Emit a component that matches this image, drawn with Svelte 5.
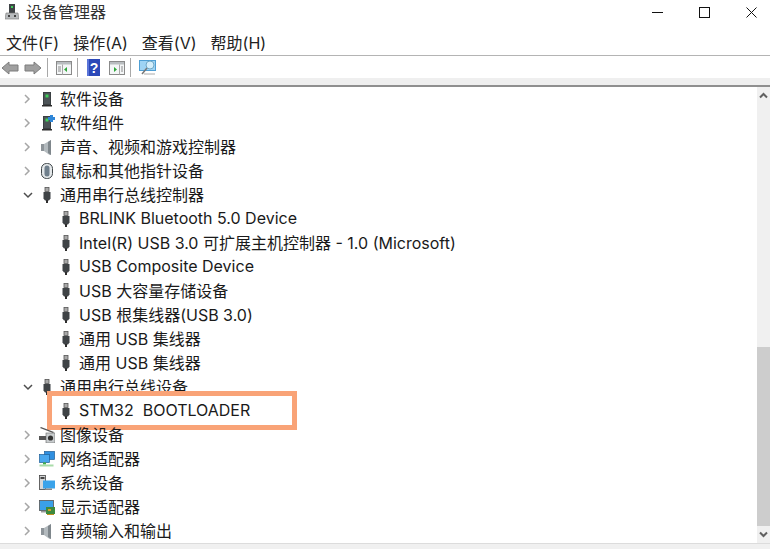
<script>
  const rows = [
    { label: '软件设备', icon: 'device', arrow: 'closed' },
    { label: '软件组件', icon: 'component', arrow: 'closed' },
    { label: '声音、视频和游戏控制器', icon: 'sound', arrow: 'closed' },
    { label: '鼠标和其他指针设备', icon: 'mouse', arrow: 'closed' },
    { label: '通用串行总线控制器', icon: 'usb', arrow: 'open' },
    { label: 'BRLINK Bluetooth 5.0 Device', icon: 'usb', child: true },
    { label: 'Intel(R) USB 3.0 可扩展主机控制器 - 1.0 (Microsoft)', icon: 'usb', child: true },
    { label: 'USB Composite Device', icon: 'usb', child: true },
    { label: 'USB 大容量存储设备', icon: 'usb', child: true },
    { label: 'USB 根集线器(USB 3.0)', icon: 'usb', child: true },
    { label: '通用 USB 集线器', icon: 'usb', child: true },
    { label: '通用 USB 集线器', icon: 'usb', child: true },
    { label: '通用串行总线设备', icon: 'usb', arrow: 'open' },
    { label: 'STM32  BOOTLOADER', icon: 'usb', child: true, marked: true },
    { label: '图像设备', icon: 'camera', arrow: 'closed' },
    { label: '网络适配器', icon: 'network', arrow: 'closed' },
    { label: '系统设备', icon: 'system', arrow: 'closed' },
    { label: '显示适配器', icon: 'display', arrow: 'closed' },
    { label: '音频输入和输出', icon: 'sound', arrow: 'closed' },
  ];
  const menus = ['文件(F)', '操作(A)', '查看(V)', '帮助(H)'];
</script>

{#snippet treeIcon(kind)}
  <svg class="ticon" width="16" height="16" viewBox="0 0 16 16">
    {#if kind === 'device' || kind === 'component'}
      <rect x="4" y="1" width="8" height="13" fill="#3a3f42" />
      <rect x="5" y="2" width="6" height="11" fill="#4c5357" />
      <rect x="6.5" y="3.5" width="3" height="3" fill="#3fd05a" />
      <rect x="3" y="14" width="10" height="1.5" fill="#2c2c2c" />
      {#if kind === 'component'}
        <path d="M9 2h2V0h3v2h2v3h-2v2h-3V5H9z" fill="#2f86d8" />
      {/if}
    {:else if kind === 'sound'}
      <path d="M2 5h3v7H2z" fill="#8d9499" />
      <path d="M5 5l7-4v16l-7-5z" fill="#b3babe" />
      <path d="M9 3l3-2v15l-3-2z" fill="#7f878c" />
    {:else if kind === 'mouse'}
      <rect x="2.5" y="0.5" width="11" height="15" rx="5" fill="#e4e8ea" stroke="#3f4649" />
      <rect x="5.5" y="2.5" width="5" height="11" rx="2.5" fill="#6f7f8c" />
    {:else if kind === 'usb'}
      <rect x="6" y="0.5" width="4" height="4" fill="#a8a8a8" stroke="#555" stroke-width="0.8" />
      <path d="M4.5 5h7v6.5l-1.5 2h-4l-1.5-2z" fill="#3f4346" />
      <rect x="7" y="13" width="2" height="3" fill="#2e2e2e" />
    {:else if kind === 'camera'}
      <path d="M2 0l13 5-1 1L1 1z" fill="#555" />
      <rect x="7" y="6" width="9" height="10" fill="#c8ccce" stroke="#666" stroke-width="0.6" />
      <circle cx="11.5" cy="11" r="2.6" fill="#333" />
      <rect x="0" y="9" width="7" height="4" fill="#555" />
    {:else if kind === 'network'}
      <rect x="5.5" y="0.5" width="10" height="8" fill="#2f8fe0" stroke="#1f5f98" stroke-width="0.7" />
      <rect x="0.5" y="3.5" width="10" height="8" fill="#49a7ee" stroke="#1f5f98" stroke-width="0.7" />
      <rect x="4" y="11.5" width="3" height="2" fill="#3fb24a" />
      <rect x="0.5" y="13.5" width="14" height="2" fill="#a9dca9" />
    {:else if kind === 'system'}
      <rect x="0.5" y="0.5" width="6" height="14" fill="#d5d7d8" stroke="#444" stroke-width="0.8" />
      <rect x="1.5" y="2" width="4" height="2" fill="#444" />
      <rect x="4" y="5.5" width="12" height="8" fill="#3aa3ea" />
      <rect x="7" y="13.5" width="6" height="1.5" fill="#888" />
    {:else if kind === 'display'}
      <rect x="0.5" y="1.5" width="14" height="10" fill="#3aa0e8" stroke="#555" stroke-width="0.8" />
      <rect x="2" y="12" width="6" height="1.5" fill="#999" />
      <rect x="7" y="8" width="9" height="7" fill="#3d8a3d" />
      <rect x="9" y="10" width="3" height="2" fill="#d0a030" />
      <rect x="8" y="15" width="7" height="1" fill="#c09020" />
    {/if}
  </svg>
{/snippet}

<div class="window">
  <header class="titlebar">
    <svg class="appicon" width="14" height="16" viewBox="0 0 14 16">
      <rect x="4" y="0" width="6" height="9" fill="#3f4346" />
      <rect x="6" y="2" width="2" height="2" fill="#3fd05a" />
      <path d="M1 9h12l1 6H0z" fill="#b9bcbe" stroke="#777" stroke-width="0.6" />
      <rect x="3" y="11" width="2" height="2" fill="#444" />
      <rect x="9" y="11" width="2" height="2" fill="#444" />
    </svg>
    <span class="title">设备管理器</span>
    <div class="winbtns">
      <svg width="11" height="11" viewBox="0 0 11 11"><path d="M0 5.5h11" stroke="#111" fill="none" /></svg>
      <svg width="11" height="11" viewBox="0 0 11 11"><rect x="0.5" y="0.5" width="10" height="10" stroke="#111" fill="none" /></svg>
      <svg width="11" height="11" viewBox="0 0 11 11"><path d="M0.5 0.5l10 10M10.5 0.5l-10 10" stroke="#111" fill="none" /></svg>
    </div>
  </header>

  <nav class="menubar">
    {#each menus as m}
      <span class="menu">{m}</span>
    {/each}
  </nav>

  <div class="toolbar">
    <svg class="tool" width="18" height="14" viewBox="0 0 18 14"><path d="M1 7l7-6v3h9v6H8v3z" fill="#a0a0a0" stroke="#7c7c7c" /></svg>
    <svg class="tool arrow2" width="18" height="14" viewBox="0 0 18 14"><path d="M17 7l-7-6v3H1v6h9v3z" fill="#a0a0a0" stroke="#7c7c7c" /></svg>
    <i class="sep s1"></i>
    <svg class="tool" width="16" height="14" viewBox="0 0 16 14">
      <rect x="0.5" y="0.5" width="15" height="13" fill="#f4f6f7" stroke="#8a8a8a" />
      <rect x="1" y="1" width="14" height="2.5" fill="#b9bdc0" />
      <path d="M6.5 3.5v10" stroke="#a8a8a8" />
      <path d="M11 6v5l-3-2.5z" fill="#2fa83a" />
      <path d="M2 6h3M2 8h3M2 10h3" stroke="#8a8a8a" />
    </svg>
    <i class="sep s2"></i>
    <svg class="tool help" width="13" height="17" viewBox="0 0 13 17">
      <rect width="13" height="17" fill="#2b48b8" />
      <rect x="0" y="0" width="2" height="17" fill="#5a74d8" />
      <text x="7" y="14" font-size="14" font-weight="700" fill="#fff" text-anchor="middle" font-family="Liberation Sans">?</text>
    </svg>
    <svg class="tool" width="16" height="14" viewBox="0 0 16 14">
      <rect x="0.5" y="0.5" width="15" height="13" fill="#f4f6f7" stroke="#8a8a8a" />
      <rect x="1" y="1" width="14" height="2.5" fill="#b9bdc0" />
      <path d="M10.5 3.5v10" stroke="#a8a8a8" />
      <path d="M5 6v5l3-2.5z" fill="#2fa83a" />
      <path d="M12 6h2M12 8h2M12 10h2" stroke="#8a8a8a" />
    </svg>
    <i class="sep s3"></i>
    <svg class="tool" width="18" height="16" viewBox="0 0 18 16">
      <rect x="0.5" y="0.5" width="16" height="10" fill="#9fd4f4" stroke="#4f9fd4" />
      <circle cx="11" cy="5" r="4" fill="#d4eefb" stroke="#6fa9c8" />
      <path d="M8 8l-5 6" stroke="#777" stroke-width="1.5" />
      <path d="M5 14h11" stroke="#aaa" />
    </svg>
  </div>

  <div class="band"></div>

  <div class="content">
    <div class="tree">
      {#each rows as row}
        <div class="row" class:child={row.child}>
          {#if row.arrow === 'closed'}
            <svg class="chev" width="9" height="10" viewBox="0 0 9 10"><path d="M2 1l4 4-4 4" fill="none" stroke="#a6a6a6" stroke-width="1.5" /></svg>
          {:else if row.arrow === 'open'}
            <svg class="chev open" width="10" height="9" viewBox="0 0 10 9"><path d="M1 2l4 4 4-4" fill="none" stroke="#4d4d4d" stroke-width="1.5" /></svg>
          {/if}
          {@render treeIcon(row.icon)}
          <span class="label">{row.label}</span>
          {#if row.marked}
            <div class="marker"></div>
          {/if}
        </div>
      {/each}
    </div>
    <div class="scrollbar">
      <div class="sbtn">
        <svg width="9" height="7" viewBox="0 0 9 7"><path d="M1 5.5l3.5-3.5 3.5 3.5" fill="none" stroke="#606060" stroke-width="2" /></svg>
      </div>
      <div class="track"><div class="thumb"></div></div>
      <div class="sbtn">
        <svg width="9" height="7" viewBox="0 0 9 7"><path d="M1 1.5l3.5 3.5 3.5-3.5" fill="none" stroke="#606060" stroke-width="2" /></svg>
      </div>
    </div>
  </div>
  <div class="status"></div>
</div>

<style>
  :global(body) {
    margin: 0;
    background: #fff;
  }
  .window {
    width: 770px;
    height: 549px;
    display: flex;
    flex-direction: column;
    overflow: hidden;
    background: #fff;
    color: #111;
    font-family: Inter, 'Noto Sans CJK SC', sans-serif;
    font-size: 16px;
  }
  .titlebar {
    height: 30px;
    display: flex;
    align-items: center;
    padding-left: 5px;
    flex: none;
  }
  .appicon {
    margin-top: -6px;
  }
  .title {
    margin-left: 7px;
    margin-top: -8px;
    color: #333;
  }
  .winbtns {
    margin-left: auto;
    margin-top: -6px;
    display: flex;
    align-items: center;
    gap: 36px;
    padding-right: 13px;
  }
  .menubar {
    height: 25px;
    flex: none;
    display: flex;
    gap: 14px;
    padding-left: 6px;
    padding-bottom: 2px;
    box-sizing: content-box;
    height: 23px;
    align-items: center;
    border-bottom: 1px solid #b4b4b4;
  }
  .menu {
    white-space: nowrap;
    color: #222;
  }
  .toolbar {
    height: 22px;
    flex: none;
    display: flex;
    align-items: center;
    padding-left: 1px;
    padding-top: 1px;
    box-sizing: border-box;
  }
  .tool {
    flex: none;
  }
  .arrow2 {
    margin-left: 5px;
  }
  .sep {
    width: 1px;
    height: 19px;
    background: #a8a8a8;
    flex: none;
  }
  .s1 {
    margin: 0 8px 0 5px;
  }
  .s2 {
    margin: 0 9px 0 5px;
  }
  .help {
    margin-right: 9px;
  }
  .s3 {
    margin: 0 8px 0 5px;
  }
  .band {
    height: 7px;
    flex: none;
    background: #efefef;
    border-bottom: 2px solid #8f8f8f;
  }
  .content {
    flex: 1;
    min-height: 0;
    display: flex;
    border-bottom: 1px solid #dcdcdc;
  }
  .tree {
    flex: 1;
    overflow: hidden;
  }
  .row {
    position: relative;
    height: 24px;
    display: flex;
    align-items: center;
    padding-left: 39px;
    white-space: pre;
  }
  .row.child {
    padding-left: 58px;
  }
  .chev {
    position: absolute;
    left: 23px;
    top: 7px;
  }
  .chev.open {
    top: 8px;
  }
  .ticon {
    flex: none;
  }
  .label {
    margin-left: 5px;
    margin-bottom: 2px;
    color: #1a1a1a;
  }
  .marker {
    position: absolute;
    left: 47px;
    top: -8px;
    width: 250px;
    height: 39px;
    box-sizing: border-box;
    border: 5px solid #f9a377;
  }
  .scrollbar {
    width: 13px;
    flex: none;
    display: flex;
    flex-direction: column;
    background: #f0f0f0;
  }
  .sbtn {
    height: 17px;
    flex: none;
    display: flex;
    align-items: center;
    justify-content: center;
  }
  .track {
    flex: 1;
    display: flex;
    flex-direction: column;
    justify-content: flex-end;
  }
  .thumb {
    height: 179px;
    background: #cdcdcd;
  }
  .status {
    height: 5px;
    flex: none;
    background: #f0f0f0;
  }
</style>
